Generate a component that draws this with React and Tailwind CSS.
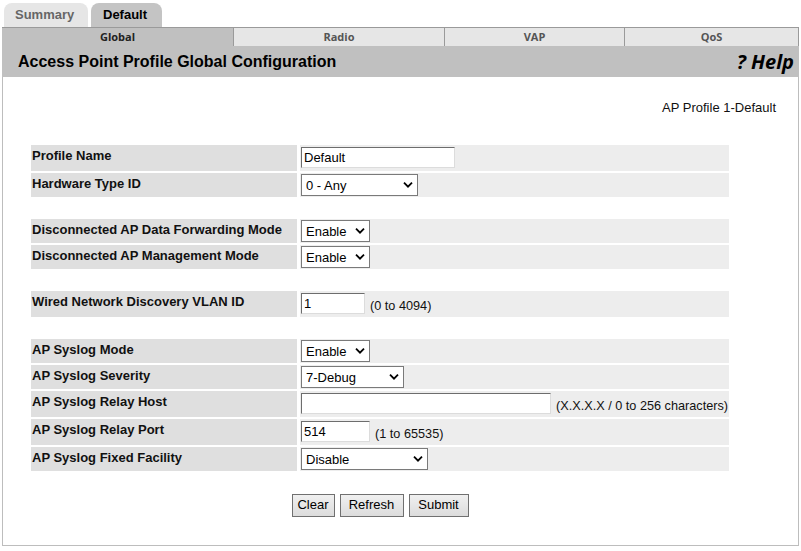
import React from "react";

const F = "font-['Liberation_Sans',Arial,sans-serif]";

function Chevron() {
  return (
    <svg width="10" height="7" viewBox="0 0 10 7" className="pointer-events-none absolute right-[5px] top-1/2 -translate-y-1/2">
      <path d="M1 1.2 L5 5.2 L9 1.2" fill="none" stroke="#000" strokeWidth="1.8" />
    </svg>
  );
}

function Select({ value, w }) {
  return (
    <div className="relative" style={{ width: w }}>
      <select
        defaultValue={value}
        className={`h-[22px] w-full appearance-none border border-[#7a7a7a] bg-white pl-[4px] text-[13px] text-black outline-none ${F}`}
      >
        <option>{value}</option>
      </select>
      <Chevron />
    </div>
  );
}

function TextInput({ value, w }) {
  return (
    <input
      defaultValue={value}
      style={{ width: w }}
      className={`mt-[2px] h-[21px] border border-t-[#6d6d6d] border-l-[#6d6d6d] border-r-[#dcdcdc] border-b-[#dcdcdc] bg-white px-[2px] text-[13px] text-black outline-none ${F}`}
    />
  );
}

function Row({ label, h, children }) {
  return (
    <div className="flex gap-[3px]" style={{ height: h }}>
      <div className="w-[266px] bg-[#dfdfdf] pl-[1px] pt-[1px] text-[13px] font-bold text-[#111]">{label}</div>
      <div className="flex flex-1 items-start gap-[5px] bg-[#ededed] pl-[1px]">{children}</div>
    </div>
  );
}

function Hint({ children }) {
  return <span className="pt-[6px] text-[12.7px] text-[#111]">{children}</span>;
}

function Spacer() {
  return <div className="h-[18px]" />;
}

export default function App() {
  return (
    <div className={`h-[551px] w-[801px] bg-white ${F}`}>
      {/* top tabs */}
      <div className="flex h-[27px] items-end gap-[3px] pl-[4px]">
        <div className="flex h-[24px] w-[84px] items-center rounded-t-[8px] bg-[#e6e6e6] pl-[11px] text-[13px] font-bold text-[#666]">
          Summary
        </div>
        <div className="flex h-[24px] w-[71px] items-center rounded-t-[8px] bg-[#c4c4c4] pl-[12px] text-[13px] font-bold text-black">
          Default
        </div>
      </div>
      <div className="mx-[2px] w-[797px]">
        {/* sub tabs */}
        <div className="flex h-[19px] border-t border-[#9a9a9a] font-['Open_Sans','Liberation_Sans',sans-serif] text-[11px] font-bold">
          <div className="flex w-[231px] items-center justify-center bg-[#c0c0c0] text-[#222]">Global</div>
          <div className="flex w-[211px] items-center justify-center border-l border-[#9a9a9a] bg-[#e6e6e6] text-[#555]">Radio</div>
          <div className="flex w-[180px] items-center justify-center border-l border-[#9a9a9a] bg-[#e6e6e6] text-[#555]">VAP</div>
          <div className="flex flex-1 items-center justify-center border-x border-[#9a9a9a] bg-[#e6e6e6] text-[#555]">QoS</div>
        </div>
        {/* title bar */}
        <div className="flex h-[31px] items-center justify-between bg-[#c0c0c0] pl-[16px] pr-[5px]">
          <span className="text-[16px] font-bold text-black">Access Point Profile Global Configuration</span>
          <span className="font-['Open_Sans','Liberation_Sans',sans-serif] text-[20px] font-bold italic text-black">? Help</span>
        </div>
        {/* content */}
        <div className="h-[469px] border-x border-b border-[#bdbdbd]">
          <div className="flex justify-end pr-[22px] pt-[21px] text-[13px] text-[#111]">AP Profile 1-Default</div>
          <div className="ml-[28px] mt-[27px] flex w-[698px] flex-col gap-[2px]">
            <Row label="Profile Name" h={26}>
              <TextInput value="Default" w={154} />
            </Row>
            <Row label="Hardware Type ID" h={24}>
              <Select value="0 - Any" w={117} />
            </Row>
            <Spacer />
            <Row label="Disconnected AP Data Forwarding Mode" h={24}>
              <Select value="Enable" w={69} />
            </Row>
            <Row label="Disconnected AP Management Mode" h={24}>
              <Select value="Enable" w={69} />
            </Row>
            <Spacer />
            <Row label="Wired Network Discovery VLAN ID" h={26}>
              <TextInput value="1" w={64} />
              <Hint>(0 to 4094)</Hint>
            </Row>
            <Spacer />
            <Row label="AP Syslog Mode" h={24}>
              <Select value="Enable" w={69} />
            </Row>
            <Row label="AP Syslog Severity" h={24}>
              <Select value="7-Debug" w={103} />
            </Row>
            <Row label="AP Syslog Relay Host" h={26}>
              <TextInput value="" w={250} />
              <Hint>(X.X.X.X / 0 to 256 characters)</Hint>
            </Row>
            <Row label="AP Syslog Relay Port" h={26}>
              <TextInput value="514" w={69} />
              <Hint>(1 to 65535)</Hint>
            </Row>
            <Row label="AP Syslog Fixed Facility" h={24}>
              <Select value="Disable" w={127} />
            </Row>
          </div>
          <div className="ml-[28px] mt-[23px] flex w-[698px] justify-center gap-[5px]">
            {["Clear", "Refresh", "Submit"].map((b, i) => (
              <button
                key={b}
                className={`h-[23px] border border-[#707070] bg-gradient-to-b from-[#f0f0f0] to-[#dcdcdc] text-[13px] text-black ${["w-[43px]", "w-[64px]", "w-[60px]"][i]}`}
              >
                {b}
              </button>
            ))}
          </div>
        </div>
      </div>
    </div>
  );
}
